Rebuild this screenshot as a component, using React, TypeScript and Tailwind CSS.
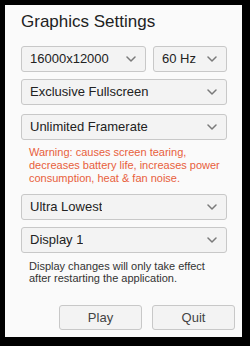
import React from 'react';

const font = { fontFamily: '"Liberation Sans", Arial, sans-serif' };

const Chevron = () => (
  <svg width="10" height="6" viewBox="0 0 10 6" className="shrink-0">
    <path d="M1 1l4 4 4-4" fill="none" stroke="#7a7a7a" strokeWidth="1.5" strokeLinecap="round" strokeLinejoin="round" />
  </svg>
);

interface SelectBoxProps {
  value: string;
  className?: string;
}

const SelectBox: React.FC<SelectBoxProps> = ({ value, className = '' }) => (
  <div
    className={
      'h-[26px] flex items-center justify-between pl-[8px] pr-[9px] bg-[#f3f3f3] border border-[#c8c8c8] rounded-[3px] text-[13px] text-[#222] ' +
      className
    }
  >
    <span className="truncate">{value}</span>
    <Chevron />
  </div>
);

const Button: React.FC<{ label: string }> = ({ label }) => (
  <button className="w-[83px] h-[25px] bg-[#f3f3f3] border border-[#c8c8c8] rounded-[3px] text-[13px] text-[#444]">
    {label}
  </button>
);

export default function App() {
  return (
    <div className="w-[250px] h-[346px] bg-black p-[5px]" style={font}>
      <div className="w-[237px] h-[332px] bg-[#fafafa] pt-[7px] pl-[16px] pr-[7px] flex flex-col">
        <h1 className="text-[17px] leading-[20px] text-[#222]">Graphics Settings</h1>
        <div className="w-[206px] flex flex-col">
          <div className="mt-[14px] flex gap-[7px]">
            <SelectBox value="16000x12000" className="w-[125px]" />
            <SelectBox value="60 Hz" className="w-[74px]" />
          </div>
          <SelectBox value="Exclusive Fullscreen" className="mt-[7px]" />
          <SelectBox value="Unlimited Framerate" className="mt-[9px]" />
          <p className="mt-[6px] pl-[8px] -mr-[4px] text-[11px] leading-[13px] text-[#e8603c]">
            Warning: causes screen tearing, decreases battery life, increases power consumption, heat &amp; fan noise.
          </p>
          <SelectBox value="Ultra Lowest" className="mt-[9px]" />
          <SelectBox value="Display 1" className="mt-[7px]" />
          <p className="mt-[7px] pl-[8px] text-[11px] leading-[12px] text-[#333]">
            Display changes will only take effect after restarting the application.
          </p>
        </div>
        <div className="mt-[21px] flex justify-end gap-[10px]">
          <Button label="Play" />
          <Button label="Quit" />
        </div>
      </div>
    </div>
  );
}
